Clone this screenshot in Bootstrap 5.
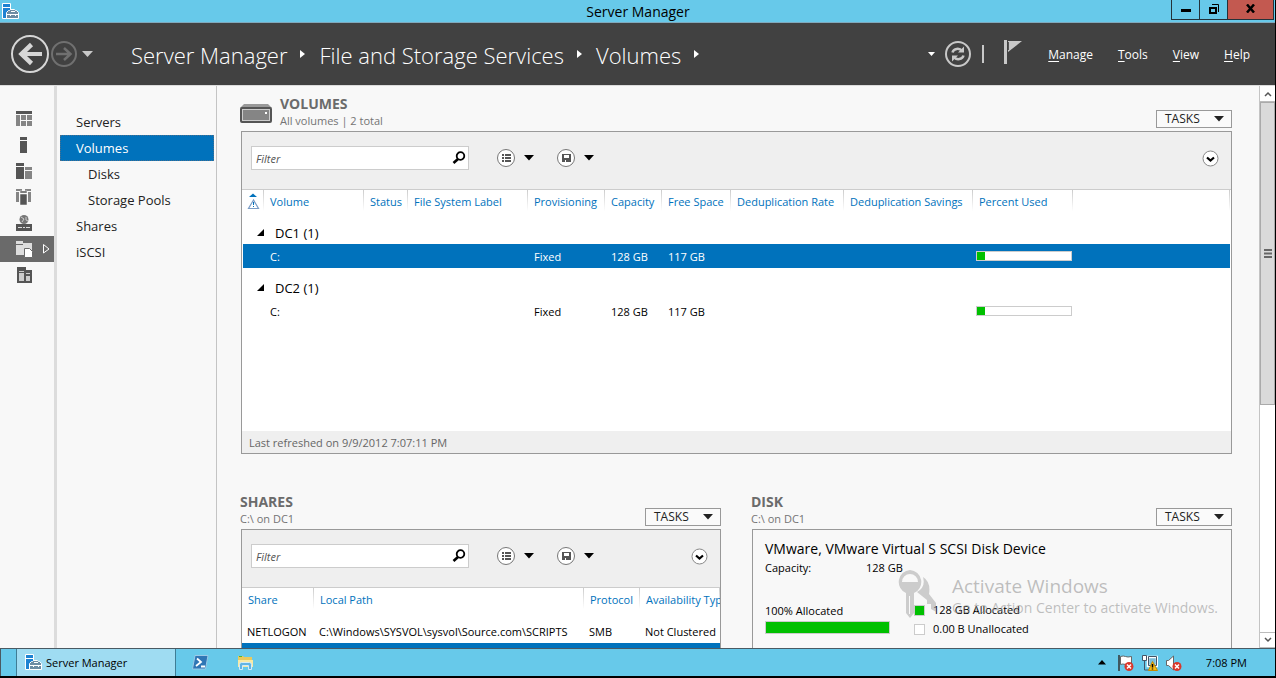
<!DOCTYPE html>
<html lang="en">
<head>
<meta charset="utf-8">
<meta name="viewport" content="width=device-width, initial-scale=1">
<title>Server Manager</title>
<link href="https://cdn.jsdelivr.net/npm/bootstrap@5.3.0/dist/css/bootstrap.min.css" rel="stylesheet">
<style>
:root{--sky:#67c9ea;--ink:#414141;--blue:#0072bc;--green:#00c000;--pane:#f8f8f8;--bar:#efefef;--edge:#999}
body{font:11px/16px "Open Sans","Noto Sans",sans-serif;color:#000;background:var(--pane)}
button{border:0;background:none;padding:0;color:inherit;font:inherit}
a{color:inherit;text-decoration:none}
svg{display:block;flex:none}
.screen{height:100vh;overflow:hidden;border-right:1px solid #000;border-bottom:2px solid #000}
.titlebar{height:23px;background:var(--sky);border-bottom:1px solid #7fa9bd;font-size:14px;line-height:23px;padding:0 1px 0 2px}
.side-end{flex:1 1 0}
.app-mark{padding-top:3px}
.winbtn{width:29px;height:20px;padding-bottom:2px;border:1px solid #24323a;border-top:0;margin-left:-1px;display:flex;align-items:center;justify-content:center}
.winclose{background:#c35950;width:47px}
.topbar{height:62px;background:var(--ink);color:#fff;padding:0 25px 0 10px}
.crumbs{font-size:22px;line-height:32px;font-weight:300;padding:2px 0 0 37px}
.crumbs svg{margin:0 10px}
.menus{font-size:12px;gap:25px;margin-left:26px;padding-top:2px}
.menus u{text-underline-offset:2px}
.bell{margin-left:20px}
.main{border-top:1px solid #dcdcdc}
.rail{width:57px;border-right:3px solid #dcdcdc;padding-top:20px}
.rail a{height:26px;padding-left:16px;display:flex;align-items:center;gap:10px}
.rail a.on{background:#6a6a6a}
.sidenav{width:160px;border-right:1px solid #c4c4c4;padding:23px 2px 0 3px;font-size:13px;color:#222}
.sidenav a{display:block;height:26px;line-height:26px;padding-left:16px}
.sidenav a.sub{padding-left:28px}
.sidenav a.on{background:var(--blue);color:#fff;outline:1px dotted #4a6f8c;outline-offset:-1px}
.content-pane{padding:10px 27px 0 23px;min-width:0}
.tile-head{height:35px;padding-bottom:3px}
.tile-head h2{font-size:14px;line-height:15px;font-weight:700;color:#6b6b6b;margin:0}
.tile-head p{margin:0;line-height:19px;color:#747474}
.tasks{width:76px;height:18px;border:1px solid var(--edge);background:#fafafa;padding:0 6px 0 8px;font-size:12px;line-height:16px;color:#222}
.panel{margin-left:1px;border:1px solid var(--edge);overflow:hidden}
.tools{height:58px;background:var(--bar);border-bottom:1px solid #ccc;padding:0 12px 5px 9px}
.search{width:218px;height:24px;border:1px solid #ccc;background:#fff;padding:0 2px 0 4px}
.search input{border:0;outline:0;width:100%;min-width:0;font-style:italic;padding:1px 0 0;background:none}
.search input::placeholder{color:#555;opacity:1}
.criteria{margin-left:27px}
.queries{margin-left:21px}
.grid{table-layout:fixed;width:100%;margin:0;border-collapse:collapse;background:#fff;white-space:nowrap}
.grid th,.grid td{padding:0 0 0 6px;font-weight:400;overflow:hidden}
.grid thead th{height:23px;color:var(--blue);background:linear-gradient(#ccc,#fff) right top/1px 21px no-repeat}
.grid tbody td{height:24px;padding-top:2px}
.grid .group th{height:31px;padding:8px 0 0 14px;font-size:13px}
.grid .group th span{gap:9px}
.grid .sel td{background:var(--blue);color:#fff}
.grid td.meter{padding:0 0 0 3px}
.used{width:96px;height:10px;border:1px solid #ccc;background:#fff}
.used div{height:8px;background:var(--green)}
.volumes-body{min-height:241px;background:#fff;padding:0 1px}
.foot{height:22px;line-height:23px;background:var(--bar);color:#666;padding-left:7px}
.lower{gap:30px;margin-top:40px}
.lower>section{flex:1 1 0;min-width:0}
.shares thead th{height:31px;vertical-align:top;padding-top:4px}
.shares tbody td{padding-left:5px}
.disk{padding:10px 12px;height:220px}
.disk h3{font-size:14px;line-height:18px;font-weight:400;margin:0 0 2px}
.cap-label{width:101px}
.disk-use{margin-top:27px}
.alloc{width:149px}
.alloc-bar{width:125px;height:13px;margin-top:2px;border:1px solid #ccc;background:var(--green)}
.key{width:11px;height:11px;border:1px solid #ccc;background:#fff}
.key.full{background:var(--green)}
.legend{display:grid;gap:3px;margin-top:-1px}
.watermark{position:absolute;right:57px;bottom:28px;color:rgba(150,150,150,.6);pointer-events:none}
.watermark strong{display:block;font-size:19px;line-height:24px;font-weight:400}
.watermark span{display:block;font-size:14px;line-height:20px}
.scroller{width:16px;border-left:1px solid #c4c4c4;background:#fff}
.scroller button{height:16px;display:flex;align-items:center;justify-content:center;border-bottom:1px solid #bbb}
.scroller button:last-child{border-top:1px solid #bbb}
.thumb{height:303px;background:#dadada;border:1px solid #aaa}
.taskbar{height:28px;background:var(--sky);border-top:1px solid #4a5a63;border-left:1px solid #4a5a63;padding-left:15px}
.task-on{width:160px;background:#9fdcf2;border:1px solid #3f7d95;border-width:0 1px;padding-left:8px;gap:4px}
</style>
</head>
<body>
<div class="screen d-flex flex-column">
  <header class="titlebar d-flex align-items-start">
    <div class="side-end app-mark">
      <svg width="17" height="17" viewBox="0 0 17 17"><path fill="#1d82d2" stroke="#fff" d="M.5.5h8v15h-8z"/><path stroke="#fff" d="M1 4.500h7"/><path fill="#6d8ca3" stroke="#fff" d="M4.500 9.500l2-2h1l1-1h4l1 1h1l2 2v6h-12z"/><path stroke="#fff" fill="none" d="M5 11.500h11M8.500 11v2M13.500 11v2M9 8.500h4"/></svg>
    </div>
    <span class="flex-shrink-0">Server Manager</span>
    <div class="side-end d-flex justify-content-end">
      <button class="winbtn" aria-label="Minimize"><svg width="10" height="10"><path d="M0 5h10v3H0z"/></svg></button>
      <button class="winbtn" aria-label="Restore"><svg width="10" height="10" fill="none" stroke="#000"><path stroke-width="2" d="M1 4h6v5H1z"/><path d="M3 .5h6.500V8"/></svg></button>
      <button class="winbtn winclose" aria-label="Close"><svg width="10" height="9"><path stroke="#000" stroke-width="2.500" d="M1 .5l7 8M8 .5l-7 8"/></svg></button>
    </div>
  </header>

  <div class="topbar d-flex align-items-center flex-shrink-0">
    <button aria-label="Back"><svg width="40" height="40" fill="none" stroke="#d6d6d6"><circle cx="20" cy="20" r="18" stroke-width="2"/><path stroke-width="4" d="M11 20h21"/><path stroke-width="4.500" d="M21.500 10.500L11.500 20l10 9.500"/></svg></button>
    <button aria-label="Forward"><svg width="28" height="28" fill="none" stroke="#707070"><circle cx="14" cy="14" r="12" stroke-width="2"/><path stroke-width="2.500" d="M6 14h14M14 8l6.500 6-6.500 6"/></svg></button>
    <button aria-label="History" class="ms-1"><svg width="12" height="8"><path fill="#c8c8c8" d="M0 1h11L5.500 7z"/></svg></button>
    <nav aria-label="breadcrumb" class="crumbs d-flex align-items-center text-nowrap">
      <a href="#">Server Manager</a><svg width="12" height="12"><path fill="#fff" d="M3 1l5 4-5 4z"/></svg>
      <a href="#">File and Storage Services</a><svg width="12" height="12"><path fill="#fff" d="M3 1l5 4-5 4z"/></svg>
      <a href="#">Volumes</a><svg width="12" height="12"><path fill="#fff" d="M3 1l5 4-5 4z"/></svg>
    </nav>
    <div class="d-flex align-items-center ms-auto">
      <button aria-label="Notifications list"><svg width="8" height="6"><path fill="#fff" d="M0 1h7L3.500 5z"/></svg></button>
      <button aria-label="Refresh" class="ms-2"><svg width="28" height="28" fill="none" stroke="#c8c8c8"><circle cx="14" cy="14" r="12" stroke-width="2"/><path stroke-width="2.500" d="M8.500 12.500c1-4 7-5 9.500-1.500M19.500 15.500c-1 4-7 5-9.500 1.500"/><path fill="#c8c8c8" stroke="none" d="M20 6.500v6h-6zM8 21.500v-6h6z"/></svg></button>
      <svg class="ms-2" width="4" height="18"><path fill="#c8c8c8" d="M2 0h2v18H2z"/></svg>
      <button class="bell" aria-label="Notifications"><svg width="18" height="28"><path fill="#c8c8c8" d="M0 0h3v24H0zM4 1h14L4 12z"/><path stroke="#555" d="M4.500 2v8"/></svg></button>
      <nav class="menus d-flex">
        <a href="#"><u>M</u>anage</a><a href="#"><u>T</u>ools</a><a href="#"><u>V</u>iew</a><a href="#"><u>H</u>elp</a>
      </nav>
    </div>
  </div>

  <div class="main d-flex flex-fill position-relative overflow-hidden">
    <nav class="rail flex-shrink-0" aria-label="Roles">
      <a href="#" aria-label="Dashboard"><svg width="16" height="16" fill="#858585"><path fill="#555" d="M0 0h16v3H0z"/><path d="M0 4h4v11H0zM5 4h5v5H5zM11 4h5v5h-5zM5 10h5v5H5zM11 10h5v5h-5z"/></svg></a>
      <a href="#" aria-label="Local Server"><svg width="16" height="16" fill="#555"><path d="M4 0h7v3H4zM4 4h7v12H4z"/></svg></a>
      <a href="#" aria-label="All Servers"><svg width="16" height="16" fill="#858585"><path fill="#555" d="M0 0h8v3H0zM0 4h8v12H0z"/><path d="M9 4h7v3H9zM9 8h7v8H9z"/></svg></a>
      <a href="#" aria-label="AD DS"><svg width="16" height="16" fill="#858585"><path d="M0 0h6v2H0zM0 3h3v10H0zM9 0h6v2H9zM12 3h3v10h-3z"/><path fill="#555" stroke="#f8f8f8" stroke-width=".5" d="M4 2h7v2H4zM4 5h7v11H4z"/></svg></a>
      <a href="#" aria-label="DNS"><svg width="16" height="16" fill="#555"><circle cx="8" cy="4.500" r="4.500" fill="#777"/><path stroke="#ccc" fill="none" d="M5 2l3 2-2 3M10 2v3l2 1"/><path d="M0 9h16v7H0z"/><path stroke="#ddd" d="M2 12.500h4M7 12.500h2M10 12.500h4"/></svg></a>
      <a href="#" class="on" aria-label="File and Storage Services"><svg width="17" height="17"><path fill="#ddd" d="M0 0h7v2h9v12H0z"/><path stroke="#6a6a6a" d="M0 3.500h7"/><path fill="#fff" stroke="#6a6a6a" d="M8.500 7.500h5l3 3v6h-8z"/></svg><svg width="7" height="10" fill="none" stroke="#fff"><path d="M.5.500v8.500L6 5z"/></svg></a>
      <a href="#" aria-label="Hyper-V"><svg width="16" height="16" fill="#555"><path d="M1 0h9v3h6v13H1z"/><path fill="#ccc" d="M3 4h5v1H3zM3 6h5v8H3zM10 6h4v1h-4zM10 9h4v5h-4z"/></svg></a>
    </nav>
    <nav class="sidenav flex-shrink-0" aria-label="File and Storage Services">
      <a href="#">Servers</a><a href="#" class="on">Volumes</a><a href="#" class="sub">Disks</a><a href="#" class="sub">Storage Pools</a><a href="#">Shares</a><a href="#">iSCSI</a>
    </nav>

    <main class="content-pane flex-fill">
      <section>
        <div class="tile-head d-flex">
          <svg class="me-2 mt-2" width="32" height="20"><path fill="#999" d="M5 0h22l5 5H0z" transform="translate(0 -1)"/><rect x="1" y="4" width="30" height="14" rx="1" fill="#858585" stroke="#555" stroke-width="2"/><rect x="2.500" y="5.500" width="27" height="11" fill="none" stroke="#ccc"/><path fill="#fff" d="M25 8h2v2h-2z"/></svg>
          <div><h2>VOLUMES</h2><p>All volumes | 2 total</p></div>
          <button class="tasks d-flex align-items-center justify-content-between ms-auto mt-auto">TASKS <svg width="11" height="6"><path fill="#222" d="M0 0h10L5 5.500z"/></svg></button>
        </div>
        <div class="panel">
          <div class="tools d-flex align-items-center">
            <label class="search d-flex align-items-center"><input type="text" placeholder="Filter" aria-label="Filter volumes"><svg width="14" height="14" fill="none" stroke="#000"><circle cx="8.500" cy="5" r="3.800" stroke-width="1.800"/><path stroke-width="2.600" d="M6 8l-4.500 4"/></svg></label>
            <button class="criteria d-flex align-items-center" aria-label="Filter criteria"><svg width="20" height="20"><circle cx="10" cy="10" r="8.500" fill="#fff" stroke="#777"/><path fill="#555" d="M6 6h2v2H6zM9 6h6v2H9zM6 9h2v2H6zM9 9h6v2H9zM6 12h2v2H6zM9 12h6v2H9z"/></svg><svg class="ms-2" width="11" height="6"><path d="M0 0h10L5 5.500z"/></svg></button>
            <button class="queries d-flex align-items-center" aria-label="Saved queries"><svg width="20" height="20"><circle cx="10" cy="10" r="8.500" fill="#fff" stroke="#777"/><path fill="#555" fill-rule="evenodd" d="M6 6h9v8H6zM8 7v3h5V7zM9 12h1v2H9z"/></svg><svg class="ms-2" width="11" height="6"><path d="M0 0h10L5 5.500z"/></svg></button>
            <button class="ms-auto" aria-label="Expand"><svg width="17" height="17" fill="none"><circle cx="8.500" cy="8.500" r="7.500" fill="#fff" stroke="#888"/><path stroke="#000" stroke-width="2.200" d="M5 7.500l3.500 3 3.500-3"/></svg></button>
          </div>
          <div class="volumes-body">
            <table class="grid">
              <colgroup><col style="width:21px"><col style="width:100px"><col style="width:44px"><col style="width:120px"><col style="width:77px"><col style="width:57px"><col style="width:69px"><col style="width:113px"><col style="width:129px"><col style="width:100px"><col></colgroup>
              <thead><tr><th class="ps-1"><svg width="13" height="18" fill="none"><path fill="#0072bc" d="M2 4l4-3.500L10 4z"/><path stroke="#7a9cc6" stroke-width="1.200" d="M6.500 7L1.500 15.500h10z"/><path stroke="#0072bc" d="M6.500 9v3M6.500 13v1"/></svg></th><th>Volume</th><th>Status</th><th>File System Label</th><th>Provisioning</th><th>Capacity</th><th>Free Space</th><th>Deduplication Rate</th><th>Deduplication Savings</th><th>Percent Used</th><th></th></tr></thead>
              <tbody>
                <tr class="group"><th colspan="11"><span class="d-flex align-items-center"><svg width="9" height="7"><path d="M7 0v7H0z"/></svg>DC1 (1)</span></th></tr>
                <tr class="sel"><td></td><td>C:</td><td></td><td></td><td>Fixed</td><td>128 GB</td><td>117 GB</td><td></td><td></td><td class="meter"><div class="used"><div style="width:9%"></div></div></td><td></td></tr>
                <tr class="group"><th colspan="11"><span class="d-flex align-items-center"><svg width="9" height="7"><path d="M7 0v7H0z"/></svg>DC2 (1)</span></th></tr>
                <tr><td></td><td>C:</td><td></td><td></td><td>Fixed</td><td>128 GB</td><td>117 GB</td><td></td><td></td><td class="meter"><div class="used"><div style="width:9%"></div></div></td><td></td></tr>
              </tbody>
            </table>
          </div>
          <div class="foot">Last refreshed on 9/9/2012 7:07:11 PM</div>
        </div>
      </section>

      <div class="lower d-flex">
        <section>
          <div class="tile-head d-flex">
            <div><h2>SHARES</h2><p>C:\ on DC1</p></div>
            <button class="tasks d-flex align-items-center justify-content-between ms-auto mt-auto">TASKS <svg width="11" height="6"><path fill="#222" d="M0 0h10L5 5.500z"/></svg></button>
          </div>
          <div class="panel">
            <div class="tools d-flex align-items-center">
              <label class="search d-flex align-items-center"><input type="text" placeholder="Filter" aria-label="Filter shares"><svg width="14" height="14" fill="none" stroke="#000"><circle cx="8.500" cy="5" r="3.800" stroke-width="1.800"/><path stroke-width="2.600" d="M6 8l-4.500 4"/></svg></label>
              <button class="criteria d-flex align-items-center" aria-label="Filter criteria"><svg width="20" height="20"><circle cx="10" cy="10" r="8.500" fill="#fff" stroke="#777"/><path fill="#555" d="M6 6h2v2H6zM9 6h6v2H9zM6 9h2v2H6zM9 9h6v2H9zM6 12h2v2H6zM9 12h6v2H9z"/></svg><svg class="ms-2" width="11" height="6"><path d="M0 0h10L5 5.500z"/></svg></button>
              <button class="queries d-flex align-items-center" aria-label="Saved queries"><svg width="20" height="20"><circle cx="10" cy="10" r="8.500" fill="#fff" stroke="#777"/><path fill="#555" fill-rule="evenodd" d="M6 6h9v8H6zM8 7v3h5V7zM9 12h1v2H9z"/></svg><svg class="ms-2" width="11" height="6"><path d="M0 0h10L5 5.500z"/></svg></button>
              <button class="ms-auto" aria-label="Expand"><svg width="17" height="17" fill="none"><circle cx="8.500" cy="8.500" r="7.500" fill="#fff" stroke="#888"/><path stroke="#000" stroke-width="2.200" d="M5 7.500l3.500 3 3.500-3"/></svg></button>
            </div>
            <table class="grid shares">
              <colgroup><col style="width:72px"><col style="width:270px"><col style="width:56px"><col></colgroup>
              <thead><tr><th>Share</th><th>Local Path</th><th>Protocol</th><th>Availability Type</th></tr></thead>
              <tbody>
                <tr><td>NETLOGON</td><td>C:\Windows\SYSVOL\sysvol\Source.com\SCRIPTS</td><td>SMB</td><td>Not Clustered</td></tr>
                <tr class="sel"><td></td><td></td><td></td><td></td></tr>
              </tbody>
            </table>
          </div>
        </section>
        <section>
          <div class="tile-head d-flex">
            <div><h2>DISK</h2><p>C:\ on DC1</p></div>
            <button class="tasks d-flex align-items-center justify-content-between ms-auto mt-auto">TASKS <svg width="11" height="6"><path fill="#222" d="M0 0h10L5 5.500z"/></svg></button>
          </div>
          <div class="panel disk">
            <h3>VMware, VMware Virtual S SCSI Disk Device</h3>
            <div class="d-flex"><span class="cap-label">Capacity:</span><span>128 GB</span></div>
            <div class="disk-use d-flex">
              <div class="alloc">100% Allocated<div class="alloc-bar"></div></div>
              <div class="legend">
                <div class="d-flex align-items-center gap-2"><span class="key full"></span>128 GB Allocated</div>
                <div class="d-flex align-items-center gap-2"><span class="key"></span>0.00 B Unallocated</div>
              </div>
            </div>
          </div>
        </section>
      </div>
    </main>

    <div class="watermark d-flex gap-3">
      <svg width="38" height="50" fill="#a0a0a0" fill-opacity=".5"><path fill-rule="evenodd" d="M12 0a12 12 0 0 1 4 23v20l-4 5-4-5V23A12 12 0 0 1 12 0zM4 12h16a8 8 0 0 0-16 0zM11 26v18h1V26z"/><path d="M25 7q8 5 6 17l11 14-2 5-7-4v-5h-4v-4l-10-8q9-5 6-15z"/></svg>
      <div class="pt-1"><strong>Activate Windows</strong><span>Go to Action Center to activate Windows.</span></div>
    </div>
    <div class="scroller d-flex flex-column flex-shrink-0">
      <button aria-label="Scroll up"><svg width="8" height="6" fill="none" stroke="#555" stroke-width="1.500"><path d="M1 5l3-3 3 3"/></svg></button>
      <div class="thumb d-flex align-items-center justify-content-center"><svg width="8" height="9"><path stroke="#666" stroke-width="2" d="M0 1h8M0 4.500h8M0 8h8"/></svg></div>
      <button class="mt-auto" aria-label="Scroll down"><svg width="8" height="6" fill="none" stroke="#555" stroke-width="1.500"><path d="M1 1l3 3 3-3"/></svg></button>
    </div>
  </div>

  <footer class="taskbar d-flex flex-shrink-0">
    <button class="task-on d-flex align-items-center"><svg width="17" height="17" viewBox="0 0 17 17"><path fill="#1d82d2" stroke="#fff" d="M.5.5h8v15h-8z"/><path stroke="#fff" d="M1 4.500h7"/><path fill="#6d8ca3" stroke="#fff" d="M4.500 9.500l2-2h1l1-1h4l1 1h1l2 2v6h-12z"/><path stroke="#fff" fill="none" d="M5 11.500h11M8.500 11v2M13.500 11v2M9 8.500h4"/></svg>Server Manager</button>
    <button class="ms-3" aria-label="PowerShell"><svg width="17" height="15"><path fill="#2f76b5" stroke="#9cc9e6" d="M3 .5h13L13.500 14H.5z"/><path fill="none" stroke="#fff" stroke-width="1.800" d="M5 3.500l4 3.500-5 4M9 11.500h4"/></svg></button>
    <button class="ms-4 ps-1" aria-label="File Explorer"><svg width="17" height="15"><path fill="#e9c95d" d="M1 1h5l1 1h8v3h1v7H1z"/><path fill="#f8e9a5" d="M1 5h15v7H1z"/><path fill="#53b531" d="M2 1h3v1H2z"/><path fill="#63b4e4" stroke="#d2ecfa" d="M2.500 14.500v-5q0-2 2-2h8q2 0 2 2v5h-3v-4h-6v4z"/></svg></button>
    <div class="d-flex align-items-center ms-auto">
      <button aria-label="Show hidden icons" class="me-2 pe-1"><svg width="8" height="5"><path d="M0 4.500L4 0l4 4.500z"/></svg></button>
      <svg class="me-2" width="16" height="16"><path stroke="#333" stroke-width="1.500" d="M1 0v16"/><path fill="#fff" stroke="#666" d="M2.500 1.500q3-1 5 0t6 0v8q-3 1-6 0t-5 0z"/><circle cx="11" cy="11.500" r="4.500" fill="#d9372b"/><path stroke="#fff" stroke-width="1.500" d="M9 9.500l4 4M13 9.500l-4 4"/></svg>
      <svg class="me-2" width="16" height="16"><path fill="#79bdd8" stroke="#fff" stroke-width="2.500" d="M6 2h9v9H6z"/><path fill="none" stroke="#456" d="M6.500 1.500h8v9h-8zM2.500 6v9h5"/><path fill="#fff" stroke="#456" d="M.5.500h4v5h-4z"/><path fill="#f7bd16" stroke="#c58a00" d="M10.500 6.500l5 9h-9z"/><path stroke="#000" stroke-width="1.500" d="M10.500 9v3.500M10.500 13.500v1"/></svg>
      <svg width="16" height="16"><path fill="#fff" stroke="#666" d="M.5 5.500h2l5-4.500v14l-5-4.500h-2z"/><circle cx="11" cy="11.500" r="4.500" fill="#d9372b"/><path stroke="#fff" stroke-width="1.500" d="M9 9.500l4 4M13 9.500l-4 4"/></svg>
      <time class="ms-4 me-4 pe-1">7:08 PM</time>
    </div>
  </footer>
</div>
<script src="https://cdn.jsdelivr.net/npm/bootstrap@5.3.0/dist/js/bootstrap.bundle.min.js"></script>
</body>
</html>
